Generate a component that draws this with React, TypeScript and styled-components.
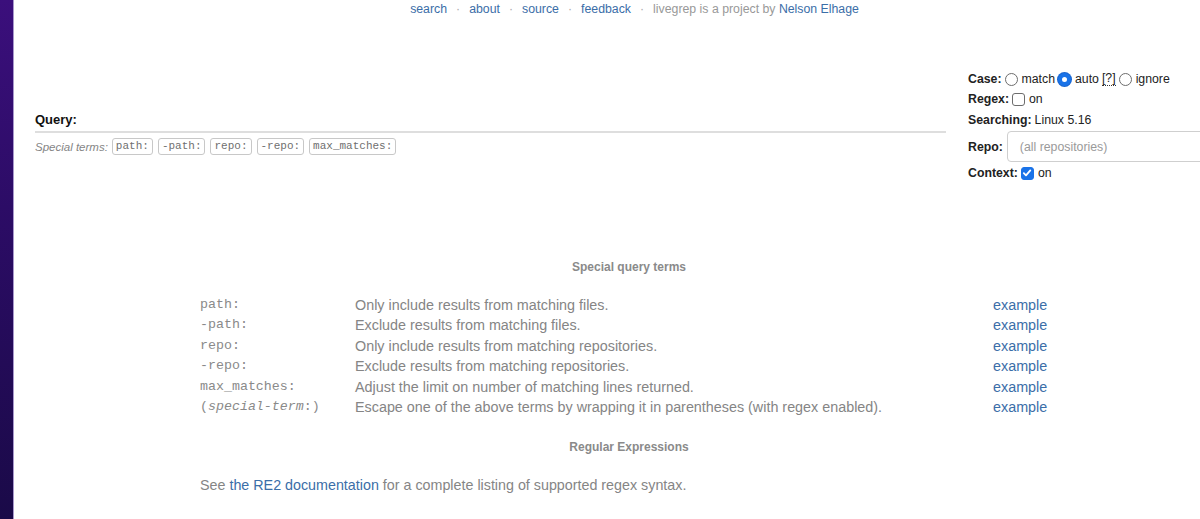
import React from "react";
import styled, { createGlobalStyle } from "styled-components";

const Global = createGlobalStyle`
  html, body { margin: 0; padding: 0; background: #fff; overflow: hidden; }
  body { font-family: "Liberation Sans", Arial, Helvetica, sans-serif; }
  #root { width: 1200px; height: 519px; overflow: hidden; }
`;

const LINK = "#3b6ea8";
const GREY = "#858585";

const Frame = styled.div`
  display: flex;
  width: 1200px;
  height: 519px;
`;

const Desktop = styled.div`
  flex: 0 0 13px;
  background: linear-gradient(180deg, #3b0f7c 0%, #2c0c66 40%, #1a0a48 100%);
  border-right: 1px solid #a898cc;
  margin-right: 1px;
`;

const Main = styled.div`
  flex: 0 0 1238px;
  background: #fff;
`;

const Nav = styled.div`
  text-align: center;
  font-size: 12.3px;
  line-height: 16px;
  padding-top: 1px;
  color: #999;
  padding-left: 1px;
`;

const NavLink = styled.a`
  color: ${LINK};
  text-decoration: none;
`;

const Dot = styled.span`
  display: inline-block;
  margin: 0 9px;
  color: #aaa;
`;

const SearchArea = styled.div`
  display: flex;
  margin-top: 51px;
`;

const QueryCol = styled.div`
  margin-left: 20px;
  width: 911px;
  padding-top: 44px;
`;

const QueryLabel = styled.div`
  font-size: 13px;
  line-height: 16px;
  font-weight: bold;
  color: #111;
`;

const QueryLine = styled.div`
  margin-top: 3px;
  height: 2px;
  background: #dedede;
`;

const TermsRow = styled.div`
  display: flex;
  align-items: center;
  gap: 5px;
  margin-top: 5px;
  height: 17px;
`;

const TermsLabel = styled.span`
  font-size: 11.5px;
  font-style: italic;
  color: ${GREY};
  margin-right: -1px;
`;

const Term = styled.code`
  font-family: "Liberation Mono", "Courier New", monospace;
  font-size: 11px;
  line-height: 15px;
  color: #6f6f6f;
  border: 1px solid #c8c8c8;
  border-radius: 3px;
  padding: 0 3px;
`;

const OptionsCol = styled.div`
  margin-left: 22px;
  margin-top: 1px;
  display: flex;
  flex-direction: column;
  font-size: 12.3px;
  color: #222;
`;

const OptRow = styled.div<{ $h?: number }>`
  display: flex;
  align-items: center;
  height: ${(p) => p.$h ?? 20}px;
  white-space: nowrap;
`;

const OptLabel = styled.span`
  font-weight: bold;
  margin-right: 3px;
`;

const Radio = styled.span<{ $on?: boolean }>`
  display: inline-block;
  box-sizing: border-box;
  width: 13px;
  height: 13px;
  border-radius: 50%;
  border: ${(p) => (p.$on ? "4px solid #1a73e8" : "1px solid #6d6d6d")};
  background: #fff;
  margin: 0 4px 0 0;
  box-shadow: ${(p) => (p.$on ? "0 0 0 1px #1a66d0" : "none")};
`;

const Box = styled.span<{ $on?: boolean }>`
  display: inline-flex;
  align-items: center;
  justify-content: center;
  box-sizing: border-box;
  width: 13px;
  height: 13px;
  border-radius: 3px;
  border: 1px solid ${(p) => (p.$on ? "#1a73e8" : "#6d6d6d")};
  background: ${(p) => (p.$on ? "#1a73e8" : "#fff")};
  margin-right: 4px;
`;

const Help = styled.abbr`
  text-decoration: none;
  border-bottom: 1px dotted #333;
  line-height: 13px;
  margin-right: 3px;
`;

const OptText = styled.span`
  margin-right: 3px;
`;

const RepoInput = styled.div`
  box-sizing: border-box;
  margin-left: 1px;
  width: 240px;
  height: 31px;
  border: 1px solid #cfcfcf;
  border-radius: 4px;
  display: flex;
  align-items: center;
  padding-left: 12px;
  color: #9a9a9a;
  font-size: 12.3px;
`;

const HelpArea = styled.div`
  margin-left: 185px;
  width: 858px;
  margin-top: 76px;
  color: ${GREY};
`;

const Heading = styled.div`
  text-align: center;
  font-size: 12px;
  line-height: 16px;
  font-weight: bold;
  color: #8a8a8a;
`;

const TermsTable = styled.div`
  display: grid;
  grid-template-columns: 155px 638px auto;
  grid-auto-rows: 20.4px;
  margin: 20px 0 22px;
  font-size: 14.35px;
  line-height: 20.4px;
`;

const Mono = styled.span`
  font-family: "Liberation Mono", "Courier New", monospace;
  font-size: 13.3px;
  color: #8a8a8a;
`;

const Desc = styled.span`
  color: ${GREY};
`;

const Example = styled.a`
  color: ${LINK};
  text-decoration: none;
`;

const Para = styled.div`
  margin-top: 20px;
  font-size: 14.3px;
  line-height: 20px;
`;

const Check = () => (
  <svg width="10" height="10" viewBox="0 0 10 10">
    <path d="M1.8 5.2 L4 7.4 L8.3 2.4" stroke="#fff" strokeWidth="1.8" fill="none" strokeLinecap="round" strokeLinejoin="round" />
  </svg>
);

const rows: [React.ReactNode, string][] = [
  ["path:", "Only include results from matching files."],
  ["-path:", "Exclude results from matching files."],
  ["repo:", "Only include results from matching repositories."],
  ["-repo:", "Exclude results from matching repositories."],
  ["max_matches:", "Adjust the limit on number of matching lines returned."],
  [
    <>
      (<i>special-term</i>:)
    </>,
    "Escape one of the above terms by wrapping it in parentheses (with regex enabled).",
  ],
];

export default function App() {
  return (
    <>
      <Global />
      <Frame>
        <Desktop />
        <Main>
          <Nav>
            <NavLink href="#">search</NavLink>
            <Dot>·</Dot>
            <NavLink href="#">about</NavLink>
            <Dot>·</Dot>
            <NavLink href="#">source</NavLink>
            <Dot>·</Dot>
            <NavLink href="#">feedback</NavLink>
            <Dot>·</Dot>
            livegrep is a project by <NavLink href="#">Nelson Elhage</NavLink>
          </Nav>
          <SearchArea>
            <QueryCol>
              <QueryLabel>Query:</QueryLabel>
              <QueryLine />
              <TermsRow>
                <TermsLabel>Special terms:</TermsLabel>
                <Term>path:</Term>
                <Term>-path:</Term>
                <Term>repo:</Term>
                <Term>-repo:</Term>
                <Term>max_matches:</Term>
              </TermsRow>
            </QueryCol>
            <OptionsCol>
              <OptRow>
                <OptLabel>Case:</OptLabel>
                <Radio />
                <OptText>match</OptText>
                <Radio $on />
                <OptText>auto</OptText>
                <Help title="help">[?]</Help>
                <Radio />
                <OptText>ignore</OptText>
              </OptRow>
              <OptRow>
                <OptLabel>Regex:</OptLabel>
                <Box />
                <span>on</span>
              </OptRow>
              <OptRow $h={21}>
                <OptLabel>Searching:</OptLabel>
                <span>Linux 5.16</span>
              </OptRow>
              <OptRow $h={33}>
                <OptLabel>Repo:</OptLabel>
                <RepoInput>(all repositories)</RepoInput>
              </OptRow>
              <OptRow>
                <OptLabel>Context:</OptLabel>
                <Box $on>
                  <Check />
                </Box>
                <span>on</span>
              </OptRow>
            </OptionsCol>
          </SearchArea>
          <HelpArea>
            <Heading>Special query terms</Heading>
            <TermsTable>
              {rows.map(([t, d], i) => (
                <React.Fragment key={i}>
                  <Mono>{t}</Mono>
                  <Desc>{d}</Desc>
                  <Example href="#">example</Example>
                </React.Fragment>
              ))}
            </TermsTable>
            <Heading>Regular Expressions</Heading>
            <Para>
              See <Example href="#">the RE2 documentation</Example> for a complete listing of supported regex syntax.
            </Para>
          </HelpArea>
        </Main>
      </Frame>
    </>
  );
}
